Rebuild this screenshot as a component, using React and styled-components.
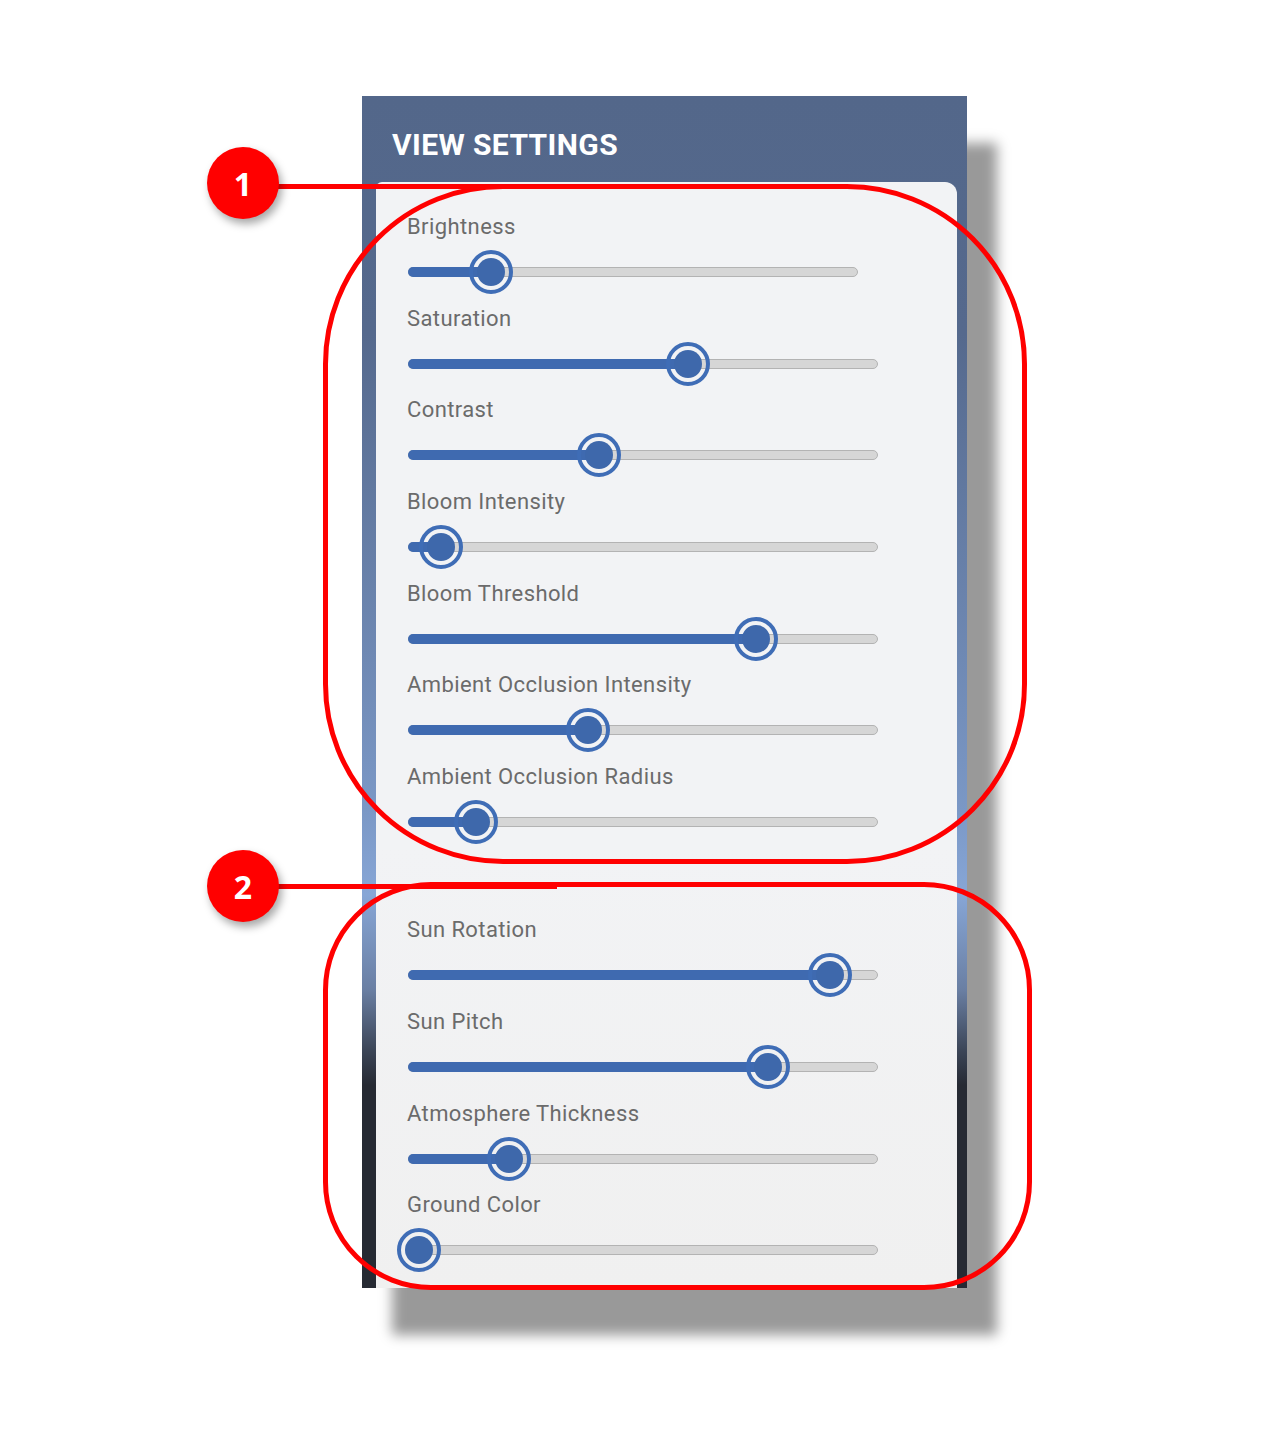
import React from 'react'
import styled, { createGlobalStyle } from 'styled-components'

const GlobalStyle = createGlobalStyle`
  html, body {
    margin: 0;
    padding: 0;
    background: #ffffff;
    font-family: Roboto, "Liberation Sans", sans-serif;
  }
`

const groups = [
  [
    { label: 'Brightness', value: 0.184, short: true },
    { label: 'Saturation', value: 0.596 },
    { label: 'Contrast', value: 0.406 },
    { label: 'Bloom Intensity', value: 0.07 },
    { label: 'Bloom Threshold', value: 0.74 },
    { label: 'Ambient Occlusion Intensity', value: 0.383 },
    { label: 'Ambient Occlusion Radius', value: 0.145 },
  ],
  [
    { label: 'Sun Rotation', value: 0.898 },
    { label: 'Sun Pitch', value: 0.766 },
    { label: 'Atmosphere Thickness', value: 0.215 },
    { label: 'Ground Color', value: 0.023 },
  ],
]

function Slider({ label, value, short }) {
  const pct = `${value * 100}%`
  return (
    <Row>
      <Label>{label}</Label>
      <SliderBox $short={short}>
        <Track />
        <Fill style={{ width: pct }} />
        <Thumb style={{ left: pct }}>
          <Dot />
        </Thumb>
      </SliderBox>
    </Row>
  )
}

export default function App() {
  return (
    <>
      <GlobalStyle />
      <Stage>
        <Panel>
          <Header>VIEW SETTINGS</Header>
          <Card>
            {groups.map((g, i) => (
              <Section key={i}>
                {g.map((s) => (
                  <Slider key={s.label} {...s} />
                ))}
              </Section>
            ))}
          </Card>
        </Panel>

        {/* callouts */}
        <Callout $top={147}>
          <Badge>1</Badge>
          <Leader $width={240} $offset={37} />
        </Callout>
        <Frame $left={323} $top={184} $width={704} $height={680} $radius={180} />

        <Callout $top={850}>
          <Badge>2</Badge>
          <Leader $width={280} $offset={34} />
        </Callout>
        <Frame $left={323} $top={882} $width={709} $height={408} $radius={108} />
      </Stage>
    </>
  )
}

const Stage = styled.div`
  position: relative;
  width: 1286px;
  height: 1440px;
  overflow: hidden;
  padding-top: 96px;
  box-sizing: border-box;
`

const Panel = styled.div`
  margin-left: 362px;
  width: 605px;
  height: 1192px;
  display: flex;
  flex-direction: column;
  background: linear-gradient(
    to bottom,
    #53678a 0%,
    #55698d 20%,
    #7b98c6 60%,
    #87a6d6 67%,
    #6a7fa3 75%,
    #3c4658 80%,
    #262a33 83%,
    #262a33 100%
  );
  box-shadow: 30px 47px 12px rgba(0, 0, 0, 0.4);
`

const Header = styled.div`
  height: 86px;
  box-sizing: border-box;
  padding: 33px 0 0 30px;
  color: #ffffff;
  font-size: 30px;
  font-weight: 700;
  line-height: 32px;
  letter-spacing: 0.4px;
`

const Card = styled.div`
  flex: 1;
  margin: 0 10px 0 14px;
  border-radius: 6px 12px 0 0;
  background: linear-gradient(to bottom, #f2f3f5 0%, #f2f3f5 60%, #f0f0f0 100%);
  padding: 33px 0 0 31px;
  display: flex;
  flex-direction: column;
  gap: 74.5px;
`

const Section = styled.div`
  display: flex;
  flex-direction: column;
  gap: 12.67px;
`

const Row = styled.div`
  display: flex;
  flex-direction: column;
  gap: 11px;
`

const Label = styled.div`
  color: #6b6b6b;
  font-size: 22px;
  line-height: 24px;
  height: 24px;
  letter-spacing: 0.4px;
`

const SliderBox = styled.div`
  position: relative;
  height: 44px;
  margin-left: 1px;
  width: ${(p) => (p.$short ? 450 : 470)}px;
`

const Track = styled.div`
  position: absolute;
  left: 0;
  right: 0;
  top: 17px;
  height: 10px;
  box-sizing: border-box;
  border: 1px solid #b3b3b3;
  background: #d6d6d6;
  border-radius: 5px;
`

const Fill = styled.div`
  position: absolute;
  left: 0;
  top: 17px;
  height: 10px;
  background: #3f6ab0;
  border-radius: 5px 0 0 5px;
`

const Thumb = styled.div`
  position: absolute;
  top: 0;
  width: 44px;
  height: 44px;
  margin-left: -22px;
  box-sizing: border-box;
  border: 4px solid #3f6db6;
  border-radius: 50%;
  display: flex;
  align-items: center;
  justify-content: center;
`

const Dot = styled.div`
  width: 28px;
  height: 28px;
  border-radius: 50%;
  background: #3e68ab;
`

const Callout = styled.div`
  position: absolute;
  left: 207px;
  top: ${(p) => p.$top}px;
  display: flex;
  align-items: flex-start;
`

const Badge = styled.div`
  width: 72px;
  height: 72px;
  border-radius: 50%;
  background: #ff0000;
  color: #ffffff;
  font-family: "Open Sans", "Liberation Sans", sans-serif;
  font-weight: 700;
  font-size: 32px;
  display: flex;
  align-items: center;
  justify-content: center;
  box-shadow: 3px 5px 8px rgba(0, 0, 0, 0.35);
  position: relative;
  z-index: 1;
`

const Leader = styled.div`
  width: ${(p) => p.$width}px;
  height: 5px;
  margin: ${(p) => p.$offset}px 0 0 -2px;
  background: #ff0000;
`

const Frame = styled.div`
  position: absolute;
  left: ${(p) => p.$left}px;
  top: ${(p) => p.$top}px;
  width: ${(p) => p.$width}px;
  height: ${(p) => p.$height}px;
  box-sizing: border-box;
  border: 5px solid #ff0000;
  border-radius: ${(p) => p.$radius}px;
  pointer-events: none;
`
